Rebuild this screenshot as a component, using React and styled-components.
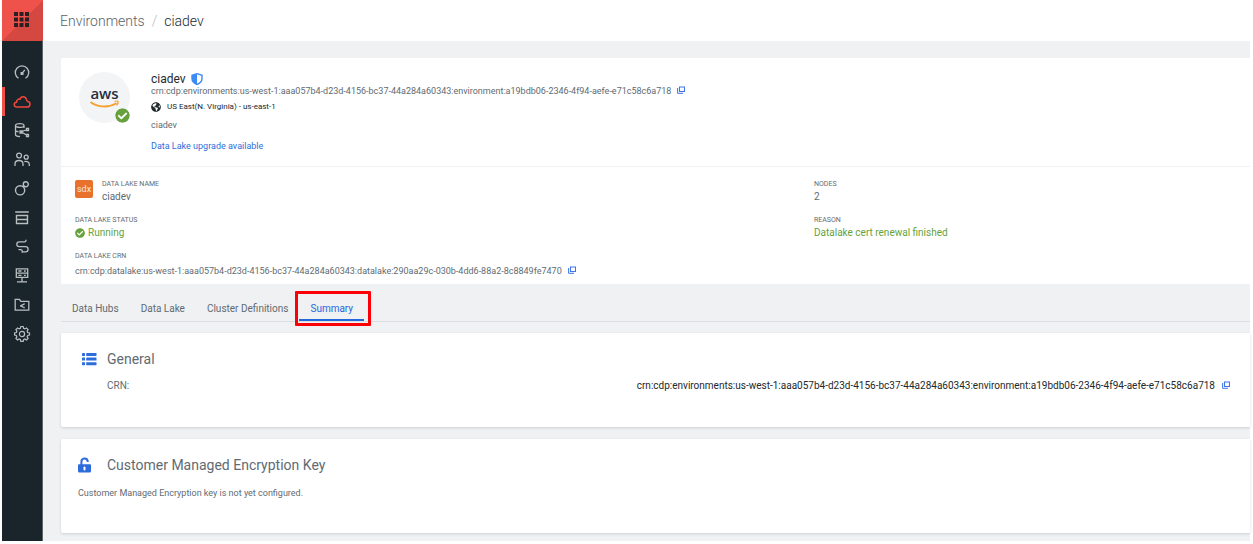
import React from 'react'
import styled, { createGlobalStyle } from 'styled-components'
import { FaCheckCircle, FaGlobeAmericas } from 'react-icons/fa'

const GlobalStyle = createGlobalStyle`
* {
  box-sizing: border-box;
}
body {
  margin: 0;
  background: white;
  color: #5f6b72;
  font-family: Roboto, 'Liberation Sans', sans-serif;
  font-size: 10px;
  line-height: 14px;
}
h1, h2, p, dl, dd, ol, ul {
  margin: 0;
  padding: 0;
  font-weight: normal;
}
li {
  list-style: none;
}
a {
  text-decoration: none;
}
`
const Shell = styled.div`
display: flex;
min-height: 100vh;
padding: 0 3px 3px 2px;
`
const Sidebar = styled.nav`
flex: none;
width: 41px;
background: #19252b;
border-right: 1px solid #5d666b;
`
const AppsButton = styled.button`
display: flex;
align-items: center;
justify-content: center;
width: 41px;
height: 41px;
padding: 0 2px 2px 0;
border: 0;
background: linear-gradient(135deg, #ee524a 50%, #d44841 50%);
cursor: pointer;
`
const NavList = styled.ul`
padding-top: 17px;
`
const NavLink = styled.a`
display: flex;
align-items: center;
justify-content: center;
height: 29px;
border-left: 3px solid ${props => (props.$active ? '#f0524a' : 'transparent')};
padding-right: 4px;
color: ${props => (props.$active ? '#f0483e' : '#b9bec1')};
`
const Page = styled.div`
flex: 1;
min-width: 0;
background: #eff1f3;
`
const Header = styled.header`
display: flex;
align-items: center;
height: 41px;
padding-left: 17px;
background: white;
`
const Crumbs = styled.ol`
display: flex;
gap: 7px;
font-size: 14px;
font-weight: 300;
line-height: 20px;
`
const CrumbLink = styled.a`
color: #56636a;
`
const Slash = styled.span`
color: #b4babd;
`
const Current = styled.h1`
color: #22292d;
font-size: 14px;
font-weight: 300;
`
const Content = styled.main`
display: flex;
flex-direction: column;
padding: 17px 0 8px 18px;
`
const Card = styled.section`
background: white;
border-radius: 2px 0 0 2px;
box-shadow: ${props => (props.$flat ? 'none' : '0 1px 3px rgba(0, 0, 0, 0.14)')};
`
const Overview = styled.div`
display: flex;
gap: 21px;
padding: 14px 18px 13px;
border-bottom: 1px solid #eff1f3;
`
const Provider = styled.div`
position: relative;
flex: none;
width: 51px;
height: 51px;
border-radius: 50%;
background: #f3f4f6;
`
const ProviderStatus = styled(FaCheckCircle)`
position: absolute;
right: 0;
bottom: 0;
color: #66a13c;
background: white;
border-radius: 50%;
`
const Details = styled.div`
display: flex;
flex-direction: column;
font-size: 9px;
`
const EnvName = styled.h2`
display: flex;
align-items: center;
gap: 5px;
color: #22292d;
font-size: 12px;
`
const Line = styled.p`
display: flex;
align-items: center;
gap: 6px;
margin-bottom: ${props => props.$space || 0}px;
color: ${props => (props.$dark ? '#22292d' : 'inherit')};
font-size: ${props => (props.$dark ? 8 : 9)}px;
line-height: ${props => (props.$tight ? 10 : 14)}px;
`
const UpgradeLink = styled.a`
color: #2f6fdc;
`
const CopyButton = styled.button`
display: inline-flex;
padding: 0 0 2px;
border: 0;
background: none;
color: #3f74e8;
cursor: pointer;
`
const Facts = styled.dl`
display: grid;
grid-template-columns: 739fr 436fr;
row-gap: 10px;
padding: 11px 0 4px 14px;
`
const Fact = styled.div`
display: flex;
gap: 9px;
`
const Label = styled.dt`
font-size: 7px;
line-height: 12px;
`
const Value = styled.dd`
display: flex;
align-items: center;
gap: ${props => (props.$small ? 6 : 3)}px;
color: ${props => (props.$ok ? '#66a13c' : 'inherit')};
font-size: ${props => (props.$small ? 9 : 10)}px;
line-height: ${props => (props.$small ? 18 : 14)}px;
`
const Sdx = styled.span`
width: 18px;
height: 18px;
margin-top: 2px;
border-radius: 2px;
background: #e8722c;
color: #fbe6d8;
font-size: 9px;
line-height: 18px;
text-align: center;
`
const Tabs = styled.div`
display: flex;
align-items: flex-end;
height: 38px;
margin-bottom: 11px;
border-bottom: 1px solid #dcdfe1;
`
const Tab = styled.button`
position: relative;
height: 22px;
padding: 0 11px;
border: 0;
border-bottom: 2px solid ${props => (props.$active ? '#2368dd' : 'transparent')};
background: none;
color: ${props => (props.$active ? '#2368dd' : '#5f6b72')};
font: 10px/20px Roboto, 'Liberation Sans', sans-serif;
cursor: pointer;
`
const Highlight = styled.span`
position: absolute;
inset: -8px -7px -7px -4px;
border: 3px solid #fb0007;
border-radius: 1px;
`
const Panel = styled(Card)`
min-height: 94px;
margin-bottom: ${props => (props.$last ? 0 : 12)}px;
padding: 16px 20px 16px 17px;
`
const PanelTitle = styled.h2`
display: grid;
grid-template-columns: 22px 1fr;
gap: 7px;
align-items: center;
color: #5f6b72;
font-size: 14px;
line-height: 20px;

svg {
  color: #2d6cdb;
}
`
const Row = styled.div`
display: flex;
justify-content: space-between;
padding: 10px 0 0 29px;
`
const RowValue = styled.span`
display: flex;
align-items: center;
gap: 7px;
color: #22292d;
`
const Note = styled.p`
padding-top: 11px;
font-size: 9px;
`

const icons = {
  Dashboard: <path d='M4.500 14.300a6.700 6.700 0 1 1 7 0M8 9.500l2.800-3.700M7.200 8.700h1.700v1.600H7.200z' />,
  Environments: <path d='M3 14C-.6 13.800-.6 9.600 2.500 9.300 2.500 7 4.300 5.800 6 6.200 7.200 2.400 12 3.300 12.500 6.900c.2.900.7 1.300 1.500 1.600C17 9.300 16.500 14 13.300 14z' strokeWidth='1.500' />,
  'Data Catalog': <path d='M1.500 3.500c0-2.500 8.500-2.500 8.500 0s-8.500 2.500-8.500 0v9c0 1.500 2 2 4.500 2M10 3.500V6M1.500 8c0 1.300 1.500 1.700 3 1.700M7 9.800l6-2.300M7 9.800l6 3.500M6 9h2v2H6zM12.500 6.500h2v2h-2zM12.500 12.500h2v2h-2z' />,
  'User Management': <path d='M2.700 4.500a2.400 2.400 0 1 0 4.800 0 2.400 2.400 0 1 0-4.800 0M10.200 6.200a2 2 0 1 0 4 0 2 2 0 1 0-4 0M1 15v-2C1 8.300 9 8.300 9 13v2M10.300 10.700c2.500-.8 5 .2 5 2.700V15' />,
  Clusters: <path d='M1.500 10.300a4.600 4.600 0 1 0 9.200 0 4.600 4.600 0 1 0-9.200 0M9.300 4.300a2.500 2.500 0 1 0 5 0 2.500 2.500 0 1 0-5 0' strokeWidth='1.400' />,
  'Data Warehouses': <path d='M1.200 3h13.600M2.500 6.500h11v8h-11zM2.500 10.500h11' strokeWidth='1.400' />,
  'ML Workspaces': <path d='M12 1.800v.8c0 .8-.6 1.200-1.500 1.200H5.200a2.400 2.400 0 0 0 0 4.800h6.300a2.600 2.600 0 0 1 0 5.200H8M4.500 11.600h2.200c1 0 1.500.6 1.500 1.500v1.700' />,
  'Classic Clusters': <path d='M2.300 1.800h11.400v4.300H2.300zM2.300 6.100h11.400v4.300H2.300zM8 10.400v4.300M3 14.900h10M4.300 4h3.200M4.300 8.300h3.200M10 4h1.800M10 8.300h1.800' />,
  Workspaces: <path d='M1.200 3.300h4.200l1.400 2h8v8.900H1.200zM6.500 9.800l3.500-1.700M6.500 9.800l3.500 1.700M6 9.800h1M9.700 8h1M9.700 11.500h1' />,
  'Global Settings': <path d='M6.800 1.500h2.400l.4 1.800 1.300.6 1.600-1 1.600 1.700-1 1.500.6 1.400 1.800.4v2.200l-1.800.4-.6 1.400 1 1.500-1.600 1.600-1.600-1-1.300.6-.4 1.800H6.800l-.4-1.800-1.300-.6-1.600 1-1.600-1.600 1-1.500-.6-1.400L.6 10.100V7.900l1.800-.4.5-1.400-1-1.500 1.600-1.700 1.600 1 1.300-.6zM5.400 9a2.600 2.600 0 1 0 5.200 0 2.600 2.600 0 1 0-5.200 0' strokeWidth='1.200' />
}

const NavIcon = ({ name }) => (
  <svg width='16' height='17' viewBox='0 0 16 17' fill='none' stroke='currentColor' strokeWidth='1.300' overflow='visible' aria-hidden='true'>
    {icons[name]}
  </svg>
)

const GridIcon = () => (
  <svg width='15' height='15' viewBox='0 0 15 15' fill='#2a2023' aria-hidden='true'>
    {[0, 5.5, 11].map(y => [0, 5.5, 11].map(x => (
      <rect key={x + '-' + y} x={x} y={y} width='4' height='4' />
    )))}
  </svg>
)

const AwsLogo = () => (
  <svg width='51' height='51' viewBox='0 0 51 51' role='img' aria-label='aws'>
    <text x='25.500' y='27' textAnchor='middle' fontFamily='Open Sans, sans-serif' fontWeight='600' fontSize='15' fill='#252f3e'>aws</text>
    <path d='M11.500 30c7 5.500 18 6 26 1.200' fill='none' stroke='#f5a02f' strokeWidth='1.800' />
    <path d='M35.500 29.500c2-.8 3.500-.5 3.600 0s-.3 2.500-1.600 3.800' fill='none' stroke='#f5a02f' strokeWidth='1.200' />
  </svg>
)

const Shield = () => (
  <svg width='12' height='12' viewBox='0 0 12 12' aria-hidden='true'>
    <path d='M6 .7 11 2.300V5.500c0 2.800-2 4.800-5 6-3-1.200-5-3.200-5-6V2.300z' fill='white' stroke='#3d8bf5' strokeWidth='1.400' />
    <path d='M6 .7V11.500c-3-1.200-5-3.200-5-6V2.300z' fill='#3d8bf5' />
  </svg>
)

const ListIcon = () => (
  <svg width='20' height='14' viewBox='0 0 20 14' fill='currentColor' aria-hidden='true'>
    {[1, 5.6, 10.2].map(y => (
      <g key={y}>
        <rect x='4' y={y} width='3' height='3' rx='.4' />
        <rect x='8.200' y={y} width='10.300' height='3' rx='.4' />
      </g>
    ))}
  </svg>
)

const UnlockIcon = () => (
  <svg width='13' height='16' viewBox='0 0 13 16' aria-hidden='true'>
    <path d='M3.400 8V4.600a3.200 3.200 0 0 1 6.300-.6v1' fill='none' stroke='currentColor' strokeWidth='2' />
    <path d='M1 7.200h11a1 1 0 0 1 1 1v6a1.300 1.300 0 0 1-1.300 1.300H1.300A1.300 1.300 0 0 1 0 14.200v-6a1 1 0 0 1 1-1z' fill='currentColor' />
    <rect x='5.500' y='9.500' width='2' height='4' rx='1' fill='white' />
  </svg>
)

const Copy = () => (
  <CopyButton aria-label='Copy'>
    <svg width='8' height='8' viewBox='0 0 8 8' fill='none' stroke='currentColor' aria-hidden='true'>
      <path d='M2.500 1h5v4.500h-5z' strokeWidth='1.100' />
      <path d='M.6 2v5.300H6' strokeWidth='1' />
    </svg>
  </CopyButton>
)

const envCrn = 'crn:cdp:environments:us-west-1:aaa057b4-d23d-4156-bc37-44a284a60343:environment:a19bdb06-2346-4f94-aefe-e71c58c6a718'
const lakeCrn = 'crn:cdp:datalake:us-west-1:aaa057b4-d23d-4156-bc37-44a284a60343:datalake:290aa29c-030b-4dd6-88a2-8c8849fe7470'
const tabs = ['Data Hubs', 'Data Lake', 'Cluster Definitions', 'Summary']

export default class App extends React.Component {
  constructor (props) {
    super(props)
    this.state = { tab: 'Summary' }
  }
  render () {
    return (
      <Shell>
        <GlobalStyle />
        <Sidebar>
          <AppsButton aria-label='Apps'><GridIcon /></AppsButton>
          <NavList>
            {Object.keys(icons).map(name => (
              <li key={name}>
                <NavLink href='#' aria-label={name} $active={name === 'Environments'}><NavIcon name={name} /></NavLink>
              </li>
            ))}
          </NavList>
        </Sidebar>
        <Page>
          <Header>
            <Crumbs>
              <li><CrumbLink href='#'>Environments</CrumbLink></li>
              <li><Slash>/</Slash></li>
              <li><Current>ciadev</Current></li>
            </Crumbs>
          </Header>
          <Content>
            <Card $flat>
              <Overview>
                <Provider>
                  <AwsLogo />
                  <ProviderStatus size={15} />
                </Provider>
                <Details>
                  <EnvName>ciadev <Shield /></EnvName>
                  <Line $tight $space={4}>{envCrn} <Copy /></Line>
                  <Line $dark $space={4}><FaGlobeAmericas size={10} /> US East(N. Virginia) - us-east-1</Line>
                  <Line $space={7}>ciadev</Line>
                  <Line><UpgradeLink href='#'>Data Lake upgrade available</UpgradeLink></Line>
                </Details>
              </Overview>
              <Facts>
                <Fact>
                  <Sdx>sdx</Sdx>
                  <div>
                    <Label>DATA LAKE NAME</Label>
                    <Value>ciadev</Value>
                  </div>
                </Fact>
                <div>
                  <Label>NODES</Label>
                  <Value>2</Value>
                </div>
                <div>
                  <Label>DATA LAKE STATUS</Label>
                  <Value $ok><FaCheckCircle size={10} /> Running</Value>
                </div>
                <div>
                  <Label>REASON</Label>
                  <Value $ok>Datalake cert renewal finished</Value>
                </div>
                <div>
                  <Label>DATA LAKE CRN</Label>
                  <Value $small>{lakeCrn} <Copy /></Value>
                </div>
              </Facts>
            </Card>
            <Tabs role='tablist'>
              {tabs.map(name => (
                <Tab
                  key={name}
                  role='tab'
                  aria-selected={this.state.tab === name}
                  $active={this.state.tab === name}
                  onClick={() => this.setState({ tab: name })}
                >
                  {name}
                  {name === 'Summary' && <Highlight />}
                </Tab>
              ))}
            </Tabs>
            <Panel>
              <PanelTitle><ListIcon /> General</PanelTitle>
              <Row>
                <span>CRN:</span>
                <RowValue>{envCrn} <Copy /></RowValue>
              </Row>
            </Panel>
            <Panel $last>
              <PanelTitle><UnlockIcon /> Customer Managed Encryption Key</PanelTitle>
              <Note>Customer Managed Encryption key is not yet configured.</Note>
            </Panel>
          </Content>
        </Page>
      </Shell>
    )
  }
}
